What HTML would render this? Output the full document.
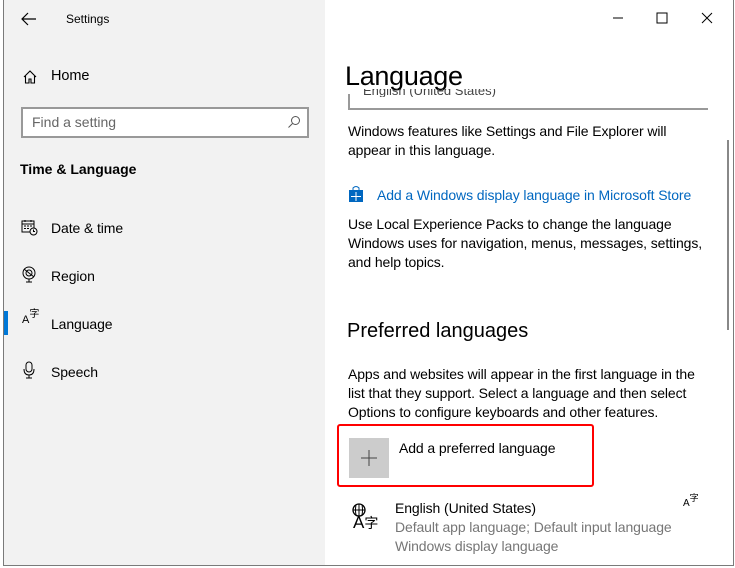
<!DOCTYPE html>
<html><head><meta charset="utf-8"><style>
*{margin:0;padding:0;box-sizing:border-box}
body{width:735px;height:568px;background:#fff;font-family:"Segoe UI","Liberation Sans",sans-serif;color:#000;position:relative;overflow:hidden}
.win{position:absolute;left:3px;top:0;width:731px;height:566px;border:1px solid #7a7a7a;border-top:none;background:#fff;overflow:hidden}
.side{position:absolute;left:0;top:0;width:321px;height:100%;background:#f2f2f2}
.t{position:absolute;white-space:nowrap}
.s14{font-size:14px;letter-spacing:-0.1px}
</style></head><body>
<div class="win">
<div class="side">
<svg class="t" style="left:17px;top:12px" width="16" height="14"><path d="M1 7H15M7 1L1 7L7 13" stroke="#000" fill="none" stroke-width="1.2"/></svg>
<div class="t" style="left:62px;top:12px;font-size:12px">Settings</div>
<svg class="t" style="left:18px;top:69px" width="16" height="16"><path d="M2 8L8 2L14 8M3.5 7V14H7V10H9V14H12.5V7" stroke="#000" fill="none" stroke-width="1.1"/></svg>
<div class="t s14" style="left:47px;top:68px;font-size:14.5px">Home</div>
<div class="t" style="left:17px;top:107px;width:288px;height:31px;border:2px solid #999;background:#fff"></div>
<div class="t" style="left:28px;top:114px;font-size:14px;color:#666">Find a setting</div>
<svg class="t" style="left:283px;top:115px" width="14" height="14"><circle cx="8.5" cy="5.5" r="4" stroke="#555" fill="none"/><path d="M5.5 8.5L1.5 12.5" stroke="#555"/></svg>
<div class="t" style="left:16px;top:161px;font-size:14px;font-weight:bold">Time &amp; Language</div>
<svg class="t" style="left:17px;top:219px" width="18" height="18"><rect x="1" y="2" width="12" height="11" stroke="#000" fill="none"/><path d="M1 5H13M4 1V3M10 1V3M3 7H5M6 7H8M9 7H11M3 9.5H5M6 9.5H8" stroke="#000"/><circle cx="12.5" cy="12.5" r="3.5" stroke="#000" fill="#f2f2f2"/><path d="M12.5 10.5V12.5H14" stroke="#000" fill="none"/></svg>
<div class="t s14" style="left:47px;top:220px">Date &amp; time</div>
<svg class="t" style="left:17px;top:266px" width="16" height="18"><circle cx="8" cy="7" r="6" stroke="#000" fill="none"/><circle cx="8" cy="7" r="3" stroke="#000" fill="none"/><path d="M8 13V16M5 16H11M3 3L13 11" stroke="#000" fill="none"/></svg>
<div class="t s14" style="left:47px;top:268px">Region</div>
<div class="t" style="left:0;top:311px;width:4px;height:24px;background:#0078d7"></div>
<div class="t" style="left:18px;top:315px;font-size:11px;line-height:11px">A<span style="font-size:10px;position:relative;top:-6px">字</span></div>
<div class="t s14" style="left:47px;top:316px">Language</div>
<svg class="t" style="left:19px;top:361px" width="12" height="18"><rect x="3" y="1" width="6" height="10" rx="3" stroke="#000" fill="none"/><path d="M1 8Q1 14 6 14Q11 14 11 8M6 14V17M3 17H9" stroke="#000" fill="none"/></svg>
<div class="t s14" style="left:47px;top:364px">Speech</div>
</div>
<svg class="t" style="left:608px;top:12px" width="12" height="12"><path d="M1 6H11" stroke="#000"/></svg>
<svg class="t" style="left:652px;top:12px" width="12" height="12"><rect x="1" y="1" width="10" height="10" stroke="#000" fill="none"/></svg>
<svg class="t" style="left:697px;top:12px" width="12" height="12"><path d="M1 1L11 11M11 1L1 11" stroke="#000"/></svg>
<div class="t" style="left:341px;top:61px;font-size:27px;font-weight:normal;letter-spacing:-0.3px">Language</div>
<div class="t" style="left:359px;top:89px;font-size:13px;color:#444;height:8px;overflow:hidden;line-height:4px">English (United States)</div>
<div class="t" style="left:344px;top:94px;width:360px;height:16px;border-left:2px solid #999;border-bottom:2px solid #999"></div>
<div class="t s14" style="left:344px;top:122px;line-height:19px">Windows features like Settings and File Explorer will<br>appear in this language.</div>
<svg class="t" style="left:344px;top:185px" width="16" height="18"><path d="M5 5V3Q8 0 11 3V5" stroke="#0067c0" fill="none"/><rect x="1" y="5" width="14" height="12" fill="#0067c0"/><path d="M8 7V16M3 11.5H13" stroke="#fff"/></svg>
<div class="t s14" style="left:373px;top:187px;color:#0067c0">Add a Windows display language in Microsoft Store</div>
<div class="t s14" style="left:344px;top:215px;line-height:19px">Use Local Experience Packs to change the language<br>Windows uses for navigation, menus, messages, settings,<br>and help topics.</div>
<div class="t" style="left:343px;top:320px;font-size:20px">Preferred languages</div>
<div class="t s14" style="left:344px;top:365px;line-height:19px">Apps and websites will appear in the first language in the<br>list that they support. Select a language and then select<br>Options to configure keyboards and other features.</div>
<div class="t" style="left:333px;top:424px;width:257px;height:63px;border:2px solid #f00;border-radius:3px"></div>
<div class="t" style="left:345px;top:438px;width:40px;height:40px;background:#ccc"></div>
<svg class="t" style="left:356px;top:449px" width="18" height="18"><path d="M9 1V17M1 9H17" stroke="#444"/></svg>
<div class="t s14" style="left:395px;top:440px">Add a preferred language</div>
<svg class="t" style="left:347px;top:503px" width="16" height="14"><circle cx="8" cy="7" r="6" stroke="#000" fill="none" stroke-width="1.3"/><path d="M2 7H14M8 1V13M5 2Q4 7 5 12M11 2Q12 7 11 12" stroke="#000" fill="none"/></svg>
<div class="t" style="left:349px;top:514px;font-size:17px;line-height:17px">A<span style="font-size:14px">字</span></div>
<div class="t s14" style="left:391px;top:500px">English (United States)</div>
<div class="t s14" style="left:391px;top:518px;color:#767676;line-height:19px">Default app language; Default input language<br>Windows display language</div>
<div class="t" style="left:679px;top:498px;font-size:10px;line-height:10px">A<span style="font-size:9px;position:relative;top:-5px">字</span></div>
<div class="t" style="left:723px;top:140px;width:2px;height:190px;background:#888"></div>
</div>
</body></html>
